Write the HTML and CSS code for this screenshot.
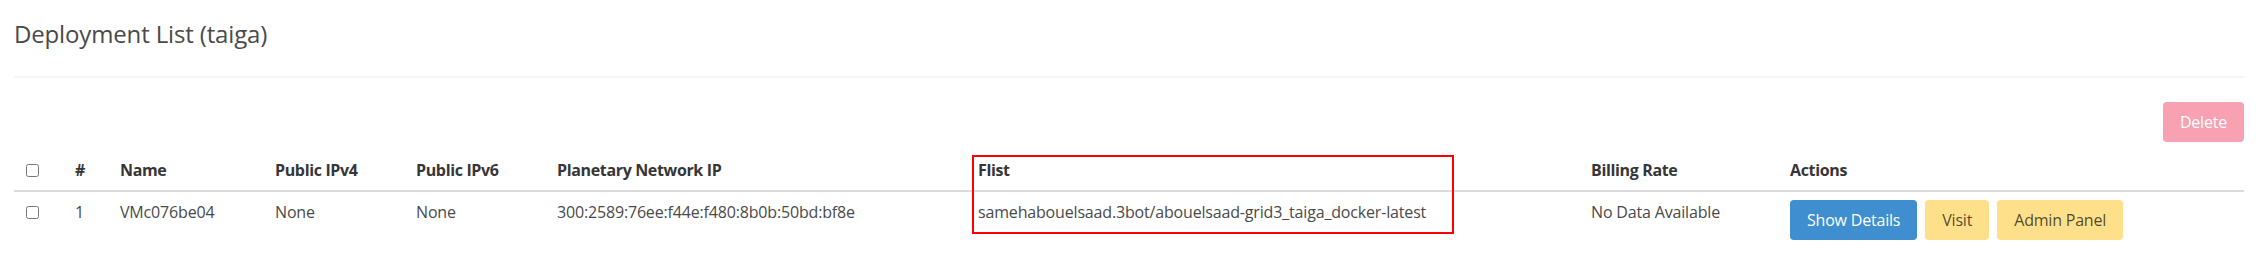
FILE: index.html
```html
<!DOCTYPE html>
<html lang="en">
<head>
<meta charset="utf-8">
<title>Deployment List (taiga)</title>
<link rel="stylesheet" href="styles.css">
</head>
<body>
<main class="page">
  <h1 class="title">Deployment List (taiga)</h1>
  <hr class="divider">
  <div class="toolbar">
    <button class="btn btn-danger" disabled>Delete</button>
  </div>
  <div class="table-wrap">
    <table class="table">
      <thead>
        <tr>
          <th class="c-check"><input type="checkbox" class="check"></th>
          <th class="c-num">#</th>
          <th class="c-name">Name</th>
          <th class="c-ip4">Public IPv4</th>
          <th class="c-ip6">Public IPv6</th>
          <th class="c-planet">Planetary Network IP</th>
          <th class="c-flist">Flist</th>
          <th class="c-billing">Billing Rate</th>
          <th class="c-actions">Actions</th>
        </tr>
      </thead>
      <tbody>
        <tr>
          <td><input type="checkbox" class="check"></td>
          <td>1</td>
          <td>VMc076be04</td>
          <td>None</td>
          <td>None</td>
          <td>300:2589:76ee:f44e:f480:8b0b:50bd:bf8e</td>
          <td>samehabouelsaad.3bot/abouelsaad-grid3_taiga_docker-latest</td>
          <td>No Data Available</td>
          <td>
            <div class="actions">
              <button class="btn btn-info">Show Details</button>
              <button class="btn btn-warning">Visit</button>
              <button class="btn btn-warning">Admin Panel</button>
            </div>
          </td>
        </tr>
      </tbody>
    </table>
    <div class="highlight"></div>
  </div>
</main>
</body>
</html>
```
FILE: styles.css
```css
html, body {
  margin: 0;
  padding: 0;
  background: #ffffff;
}

body {
  font-family: "Open Sans", "Noto Sans", sans-serif;
  font-size: 16px;
  line-height: 1.5;
  color: #4a4a4a;
}

.page {
  padding: 0 14px;
}

.title {
  margin: 19px 0 0;
  font-size: 24px;
  line-height: 30px;
  font-weight: 400;
  letter-spacing: -0.15px;
  color: #4a4a4a;
}

.divider {
  margin: 27px 0 24px;
  height: 2px;
  border: none;
  background: #f5f5f5;
}

.toolbar {
  display: flex;
  justify-content: flex-end;
  margin-bottom: 8px;
}

.btn {
  display: inline-flex;
  align-items: center;
  justify-content: center;
  height: 40px;
  padding: 0 16px;
  border: 1px solid transparent;
  border-radius: 4px;
  font-family: inherit;
  font-size: 16px;
  line-height: 1.5;
  letter-spacing: -0.2px;
  cursor: pointer;
  white-space: nowrap;
}

.btn-danger {
  background: #f14668;
  color: #ffffff;
  opacity: 0.5;
  cursor: not-allowed;
}

.btn-info {
  background: #3e8ed0;
  color: #ffffff;
}

.btn-warning {
  background: #ffe08a;
  color: rgba(0, 0, 0, 0.7);
}

.table-wrap {
  position: relative;
}

.table {
  width: 100%;
  border-collapse: collapse;
  table-layout: fixed;
}

.table th,
.table td {
  padding: 8px 12px;
  text-align: left;
  vertical-align: top;
  white-space: nowrap;
}

.table th {
  color: #363636;
  font-weight: 700;
  letter-spacing: -0.35px;
  border-bottom: 2px solid #dbdbdb;
}

.table td {
  color: #4a4a4a;
  letter-spacing: -0.17px;
}

.c-check { width: 49px; }
.c-num { width: 45px; }
.c-name { width: 155px; }
.c-ip4 { width: 141px; }
.c-ip6 { width: 141px; }
.c-planet { width: 421px; }
.c-flist { width: 613px; }
.c-billing { width: 199px; }

.table th, .table td { box-sizing: border-box; }

.check {
  width: 13px;
  height: 13px;
  margin: 0;
  vertical-align: -1px;
}

.actions {
  display: flex;
  gap: 8px;
}

.highlight {
  position: absolute;
  left: 958px;
  top: 5px;
  width: 478px;
  height: 75px;
  border: 2px solid #ff0000;
  pointer-events: none;
}
```
